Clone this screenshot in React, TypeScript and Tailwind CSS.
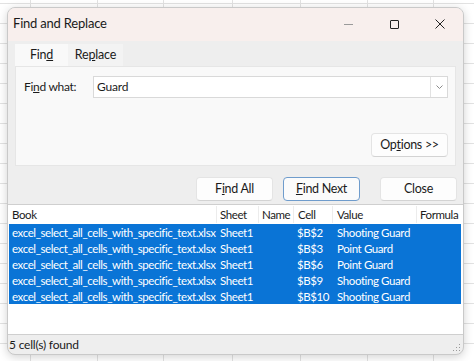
import React from "react";

const rows = [
  { cell: "$B$2", value: "Shooting Guard" },
  { cell: "$B$3", value: "Point Guard" },
  { cell: "$B$6", value: "Point Guard" },
  { cell: "$B$9", value: "Shooting Guard" },
  { cell: "$B$10", value: "Shooting Guard" },
];

const font = { fontFamily: 'Lato, "Noto Sans", sans-serif' };

function Grid() {
  const v = [30, 97, 163, 232, 300, 367, 433];
  const h: number[] = [];
  for (let y = 3; y < 361; y += 20) h.push(y);
  return (
    <svg className="absolute inset-0" width="474" height="361">
      <rect width="474" height="361" fill="#ffffff" />
      {v.map((x) => (
        <line key={"v" + x} x1={x + 0.5} y1={0} x2={x + 0.5} y2={361} stroke="#e2e2e2" />
      ))}
      {h.map((y) => (
        <line key={"h" + y} x1={0} y1={y + 0.5} x2={474} y2={y + 0.5} stroke="#e2e2e2" />
      ))}
    </svg>
  );
}

function Btn({ children, focused }: { children: React.ReactNode; focused?: boolean }) {
  return (
    <div
      className={
        "flex h-[24px] w-[77px] items-center justify-center rounded-[4px] text-[12.5px] tracking-[-0.3px] text-[#1b1b1b] " +
        (focused ? "border border-[#6f9ccc] bg-[#fbfbfb]" : "border border-[#e4e4e4] border-b-[#d3d3d3] bg-[#fdfdfd]")
      }
    >
      {children}
    </div>
  );
}

export default function App() {
  return (
    <div className="relative h-[361px] w-[474px] overflow-hidden" style={font}>
      <Grid />
      <div className="absolute left-[7px] top-[7px] flex h-[348px] w-[457px] flex-col overflow-hidden rounded-[8px] border border-[#c9c9c9] bg-[#eeeeee] shadow-[0_2px_10px_rgba(0,0,0,0.18)]">
        {/* Title bar */}
        <div className="flex h-[33px] shrink-0 items-center bg-[#f8efed] pb-[1px] pl-[5px]">
          <span className="text-[13px] tracking-[-0.2px] text-[#1a1a1a]">Find and Replace</span>
          <div className="ml-auto flex items-center">
            <div className="flex w-[46px] items-center justify-center">
              <div className="h-px w-[9px] bg-[#9a9a9a]" />
            </div>
            <div className="flex w-[46px] items-center justify-center">
              <div className="h-[9px] w-[9px] rounded-[1px] border border-[#222]" />
            </div>
            <div className="flex w-[46px] items-center justify-center">
              <svg width="10" height="10" viewBox="0 0 10 10">
                <path d="M0.5 0.5 L9.5 9.5 M9.5 0.5 L0.5 9.5" stroke="#222" strokeWidth="1" />
              </svg>
            </div>
          </div>
        </div>

        {/* Tabs */}
        <div className="mt-[3px] flex h-[22px] shrink-0 pl-[7px] text-[12.5px] tracking-[-0.2px] text-[#1b1b1b]">
          <div className="flex w-[53px] items-center justify-center bg-[#f9f9f9]">
            <span>
              Fin<u>d</u>
            </span>
          </div>
          <div className="flex w-[55px] items-center justify-center bg-[#f3f3f3]">
            <span>
              Re<u>p</u>lace
            </span>
          </div>
        </div>

        {/* Panel */}
        <div className="mx-[7px] flex h-[100px] shrink-0 flex-col border border-[#e6e6e6] bg-[#f9f9f9] px-[7px]">
          <div className="mt-[9px] flex h-[22px] items-center">
            <span className="w-[70px] pl-[1px] text-[12px] tracking-[-0.3px] text-[#1b1b1b]">
              Fi<u>n</u>d what:
            </span>
            <div className="flex h-[22px] flex-1 items-center border border-[#d9d9d9] bg-white">
              <span className="pl-[3px] text-[12px] tracking-[-0.2px] text-[#1b1b1b]">Guard</span>
              <div className="ml-auto flex h-full w-[17px] items-center justify-center border-l border-[#e2e2e2]">
                <svg width="7" height="4" viewBox="0 0 7 4">
                  <path d="M0.5 0.5 L3.5 3.5 L6.5 0.5" fill="none" stroke="#8a8a8a" strokeWidth="1" />
                </svg>
              </div>
            </div>
          </div>
          <div className="mt-auto mb-[8px] flex justify-end">
            <Btn>
              Op<u>t</u>ions &gt;&gt;
            </Btn>
          </div>
        </div>

        {/* Buttons */}
        <div className="mt-[11px] flex shrink-0 justify-end gap-[10px] pr-[6px]">
          <Btn>
            F<u>i</u>nd All
          </Btn>
          <Btn focused>
            <u>F</u>ind Next
          </Btn>
          <div className="ml-[10px]">
            <Btn>Close</Btn>
          </div>
        </div>

        {/* Results table */}
        <div className="mt-[3px] flex h-[131px] shrink-0 flex-col border-y border-[#cfcfcf] bg-white px-[1px] text-[11.5px] tracking-[-0.4px]">
          <div className="grid h-[19px] grid-cols-[207px_42px_35px_39px_84px_1fr] items-center whitespace-nowrap text-[#1b1b1b]">
            <span className="pl-[3px]">Book</span>
            <span className="border-l border-[#ececec] pl-[3px]">Sheet</span>
            <span className="border-l border-[#ececec] pl-[3px]">Name</span>
            <span className="border-l border-[#ececec] pl-[4px]">Cell</span>
            <span className="border-l border-[#ececec] pl-[4px]">Value</span>
            <span className="border-l border-[#ececec] pl-[3px]">Formula</span>
          </div>
          <div className="mr-[1px] flex flex-col">
            {rows.map((r, i) => (
              <div
                key={i}
                className="grid h-[16px] grid-cols-[207px_42px_35px_39px_84px_1fr] items-center whitespace-nowrap bg-[#0a74d6] text-white"
              >
                <span className="pl-[3px]">excel_select_all_cells_with_specific_text.xlsx</span>
                <span className="pl-[4px]">Sheet1</span>
                <span></span>
                <span className="pl-[4px]">{r.cell}</span>
                <span className="pl-[5px]">{r.value}</span>
                <span></span>
              </div>
            ))}
          </div>
        </div>

        {/* Status */}
        <div className="relative flex flex-1 items-center pl-[1px] text-[12px] tracking-[-0.2px] text-[#1b1b1b]">
          <span>5 cell(s) found</span>
          <svg className="absolute bottom-[2px] right-[2px]" width="8" height="8" viewBox="0 0 8 8">
            <rect x="6" y="0" width="1" height="1" fill="#9a9a9a" />
            <rect x="3" y="3" width="1" height="1" fill="#9a9a9a" />
            <rect x="6" y="3" width="1" height="1" fill="#9a9a9a" />
            <rect x="0" y="6" width="1" height="1" fill="#9a9a9a" />
            <rect x="3" y="6" width="1" height="1" fill="#9a9a9a" />
            <rect x="6" y="6" width="1" height="1" fill="#9a9a9a" />
          </svg>
        </div>
      </div>
    </div>
  );
}
